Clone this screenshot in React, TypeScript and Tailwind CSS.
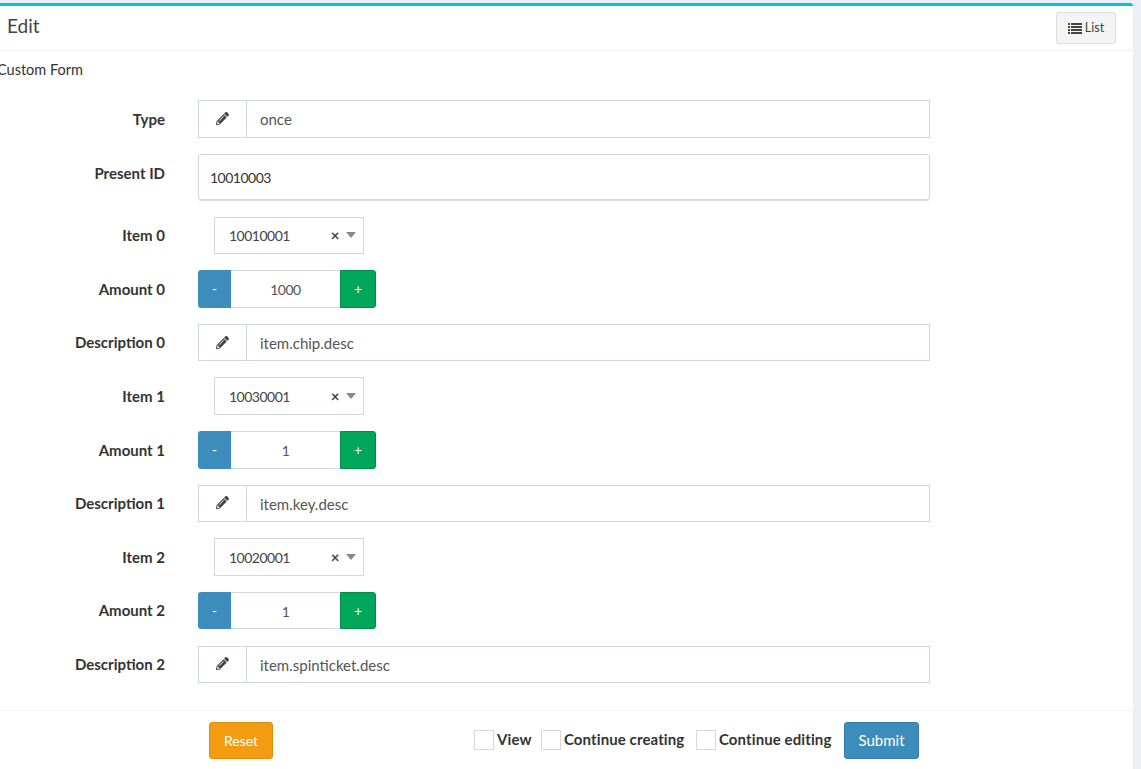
import { FaPencilAlt } from "react-icons/fa";

const font = { fontFamily: "Lato, 'Open Sans', sans-serif" };

function Label({ children }: { children: string }) {
  return (
    <div className="w-[165px] shrink-0 text-right text-[15px] font-bold text-[#333]">
      {children}
    </div>
  );
}

function ListIcon() {
  return (
    <svg width="14" height="11" viewBox="0 0 14 11" fill="#444">
      <rect x="0" y="0" width="2" height="2" />
      <rect x="3" y="0" width="11" height="2" />
      <rect x="0" y="3" width="2" height="2" />
      <rect x="3" y="3" width="11" height="2" />
      <rect x="0" y="6" width="2" height="2" />
      <rect x="3" y="6" width="11" height="2" />
      <rect x="0" y="9" width="2" height="2" />
      <rect x="3" y="9" width="11" height="2" />
    </svg>
  );
}

function TextRow({ label, value, h = "h-[37.5px]" }: { label: string; value: string; h?: string }) {
  return (
    <div className={`flex items-center ${h}`}>
      <Label>{label}</Label>
      <div className="ml-[33px] flex h-full w-[732px] border border-[#d2d6de] text-[15px] text-[#555]">
        <div className="flex w-[48px] shrink-0 items-center justify-center border-r border-[#d2d6de]">
          <FaPencilAlt className="mb-px text-[13px] text-[#444]" />
        </div>
        <div className="flex flex-1 items-center pl-[13px] pt-px">{value}</div>
      </div>
    </div>
  );
}

function SelectRow({ label, value }: { label: string; value: string }) {
  return (
    <div className="flex h-[37.5px] items-center">
      <Label>{label}</Label>
      <div className="ml-[49px] flex h-full w-[150px] items-center border border-[#d2d6de] pl-[14px] text-[14px] tracking-[-0.5px] text-[#444]">
        <span className="flex-1">{value}</span>
        <span className="mr-[7px] text-[15px] font-bold leading-none">×</span>
        <span className="mr-[7px] h-0 w-0 border-x-[5px] border-t-[6px] border-x-transparent border-t-[#888]" />
      </div>
    </div>
  );
}

function AmountRow({ label, value }: { label: string; value: string }) {
  return (
    <div className="flex h-[37.5px] items-center">
      <Label>{label}</Label>
      <div className="ml-[33px] flex h-full text-[14px]">
        <div className="flex w-[33px] items-center justify-center rounded-l-[3px] bg-[#3c8dbc] text-white">-</div>
        <div className="flex w-[109px] items-center justify-center border-y border-[#d2d6de] pt-px tracking-[-0.5px] text-[#555]">
          {value}
        </div>
        <div className="flex w-[36px] items-center justify-center rounded-r-[3px] border border-[#008d4c] bg-[#00a65a] text-white">
          +
        </div>
      </div>
    </div>
  );
}

function Check({ label, width }: { label: string; width: string }) {
  return (
    <label className={`flex items-center ${width}`}>
      <span className="h-[20px] w-[20px] shrink-0 border border-[#d8d8d8] bg-white" />
      <span className="mb-[2px] ml-[3px] text-[15px] font-bold tracking-[0.1px] text-[#333]">{label}</span>
    </label>
  );
}

export default function App() {
  return (
    <div className="h-screen overflow-hidden bg-[#ecf0f5] pt-[3px]" style={font}>
      <div className="w-[1133px] rounded-tr-[3px] border-t-[3px] border-[#00c0ef] bg-white">
        <div className="flex h-[45px] items-center justify-between border-b border-[#f4f4f4] pl-[7px] pr-[17px]">
          <h3 className="mb-[3px] text-[19px] text-[#444]">Edit</h3>
          <button className="flex h-[32px] w-[60px] items-center justify-center gap-[3px] rounded-[3px] border border-[#ddd] bg-[#f4f4f4] text-[12.5px] text-[#444]">
            <ListIcon />
            List
          </button>
        </div>

        <div className="-ml-[3px] mt-[10px] h-[18px] text-[14.5px] leading-[18px] text-[#333]">Custom Form</div>

        <div className="mt-[21px] flex flex-col gap-[16px]">
          <TextRow label="Type" value="once" h="h-[38px]" />
          <div className="flex h-[46px]">
            <div className="pt-[8px]">
              <Label>Present ID</Label>
            </div>
            <div className="ml-[33px] flex w-[732px] items-center rounded-[3px] border border-[#d2d6de] pl-[11px] text-[14px] tracking-[-0.5px] text-[#333] shadow-[0_1px_1px_rgba(0,0,0,0.15)]">
              10010003
            </div>
          </div>
          <div className="mt-[0.5px] flex flex-col gap-[16.15px]">
            <SelectRow label="Item 0" value="10010001" />
            <AmountRow label="Amount 0" value="1000" />
            <TextRow label="Description 0" value="item.chip.desc" />
            <SelectRow label="Item 1" value="10030001" />
            <AmountRow label="Amount 1" value="1" />
            <TextRow label="Description 1" value="item.key.desc" />
            <SelectRow label="Item 2" value="10020001" />
            <AmountRow label="Amount 2" value="1" />
            <TextRow label="Description 2" value="item.spinticket.desc" />
          </div>
        </div>

        <div className="mt-[26.8px] flex h-[60px] items-start border-t border-[#f4f4f4] pt-[11px]">
          <button className="ml-[209px] h-[37px] w-[64px] rounded-[3px] border border-[#e08e0b] bg-[#f39c12] text-[14px] text-white">
            Reset
          </button>
          <div className="ml-[201px] flex h-[37px] items-center">
            <Check label="View" width="w-[67px]" />
            <Check label="Continue creating" width="w-[155px]" />
            <Check label="Continue editing" width="w-[148px]" />
          </div>
          <button className="h-[37px] w-[75px] rounded-[3px] border border-[#367fa9] bg-[#3c8dbc] text-[15px] text-white">
            Submit
          </button>
        </div>
      </div>
    </div>
  );
}
